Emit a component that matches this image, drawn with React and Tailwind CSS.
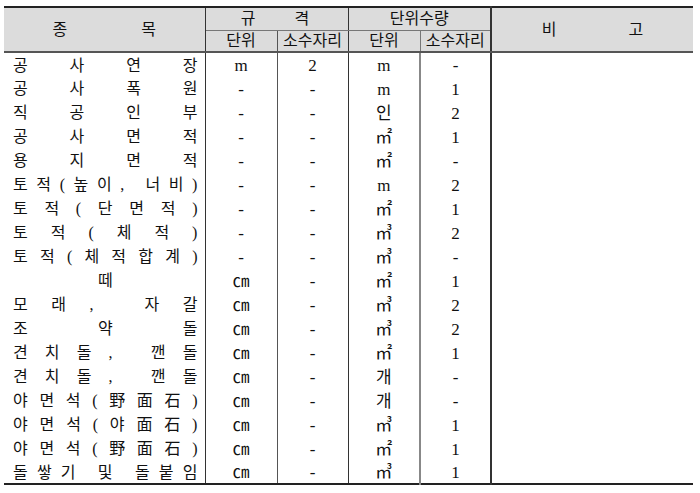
import React from 'react';

const rows = [
  { name: '공사연장', a: 'm', b: '2', c: 'm', d: '-' },
  { name: '공사폭원', a: '-', b: '-', c: 'm', d: '1' },
  { name: '직공인부', a: '-', b: '-', c: '인', d: '2' },
  { name: '공사면적', a: '-', b: '-', c: '㎡', d: '1' },
  { name: '용지면적', a: '-', b: '-', c: '㎡', d: '-' },
  { name: '토적(높이, 너비)', a: '-', b: '-', c: 'm', d: '2' },
  { name: '토적(단면적)', a: '-', b: '-', c: '㎡', d: '1' },
  { name: '토적(체적)', a: '-', b: '-', c: '㎥', d: '2' },
  { name: '토적(체적합계)', a: '-', b: '-', c: '㎥', d: '-' },
  { name: '떼', a: '㎝', b: '-', c: '㎡', d: '1' },
  { name: '모래, 자갈', a: '㎝', b: '-', c: '㎥', d: '2' },
  { name: '조약돌', a: '㎝', b: '-', c: '㎥', d: '2' },
  { name: '견치돌, 깬돌', a: '㎝', b: '-', c: '㎡', d: '1' },
  { name: '견치돌, 깬돌', a: '㎝', b: '-', c: '개', d: '-' },
  { name: '야면석(野面石)', a: '㎝', b: '-', c: '개', d: '-' },
  { name: '야면석(야面石)', a: '㎝', b: '-', c: '㎥', d: '1' },
  { name: '야면석(野面石)', a: '㎝', b: '-', c: '㎡', d: '1' },
  { name: '돌쌓기 및 돌붙임', a: '㎝', b: '-', c: '㎥', d: '1' },
];

// 한글 배분정렬: 글자(공백 포함)를 칸 너비에 고르게 펼침
function Spread({ text }) {
  const chars = Array.from(text);
  if (chars.length === 1) {
    return <div className="flex justify-center">{text}</div>;
  }
  return (
    <div className="flex justify-between">
      {chars.map((ch, i) => (
        <span key={i} className="min-w-[4px]">{ch === ' ' ? '\u00a0' : ch}</span>
      ))}
    </div>
  );
}

export default function App() {
  const cell = 'text-center p-0 leading-none';
  const num = 'text-[17px]';
  return (
    <div className="w-[700px] h-[493px] bg-white pt-[6px] pl-[4px] text-[16px] text-[#111]" style={{ fontFamily: "'Liberation Serif', 'Noto Sans CJK KR', serif" }}>
      <table className="table-fixed border-collapse w-[689px] border-t-2 border-b-2 border-t-[#222] border-b-[#222]">
        <colgroup>
          <col className="w-[201px]" />
          <col className="w-[72px]" />
          <col className="w-[71px]" />
          <col className="w-[72px]" />
          <col className="w-[71px]" />
          <col className="w-[202px]" />
        </colgroup>
        <thead className="bg-[#dcdcdc]">
          <tr className="h-[23px]">
            <th rowSpan={2} className={`${cell} font-normal border-r border-r-[#333] border-b-2 border-b-[#555]`}>
              <div className="flex justify-center gap-[74px]"><span>종</span><span>목</span></div>
            </th>
            <th colSpan={2} className={`${cell} font-normal border-r border-r-[#333] border-b border-b-[#777]`}>
              <div className="flex justify-center gap-[39px] pr-[3px]"><span>규</span><span>격</span></div>
            </th>
            <th colSpan={2} className={`${cell} font-normal border-r-2 border-r-[#333] border-b border-b-[#777]`}>
              단위수량
            </th>
            <th rowSpan={2} className={`${cell} font-normal border-b-2 border-b-[#555]`}>
              <div className="flex justify-center gap-[72px]"><span>비</span><span>고</span></div>
            </th>
          </tr>
          <tr className="h-[22px]">
            <th className={`${cell} font-normal border-r border-r-[#555] border-b-2 border-b-[#555]`}>단위</th>
            <th className={`${cell} font-normal border-r border-r-[#333] border-b-2 border-b-[#555]`}>소수자리</th>
            <th className={`${cell} font-normal border-r border-r-[#777] border-b-2 border-b-[#555]`}>단위</th>
            <th className={`${cell} font-normal border-r-2 border-r-[#333] border-b-2 border-b-[#555]`}>소수자리</th>
          </tr>
        </thead>
        <tbody>
          {rows.map((r, i) => (
            <tr key={i} className="h-[24px]">
              <td className="p-0 pl-[9px] pr-[7px] pt-[2px] leading-none border-r border-r-[#333]">
                <Spread text={r.name} />
              </td>
              <td className={`${cell} ${num} pt-[2px] border-r border-r-[#555]`}>{r.a}</td>
              <td className={`${cell} ${num} pt-[2px] border-r border-r-[#333]`}>{r.b}</td>
              <td className={`${cell} ${num} pt-[2px] border-r-2 border-r-[#888]`}>{r.c}</td>
              <td className={`${cell} ${num} pt-[2px] border-r-2 border-r-[#333]`}>{r.d}</td>
              <td className="p-0"></td>
            </tr>
          ))}
        </tbody>
      </table>
    </div>
  );
}
